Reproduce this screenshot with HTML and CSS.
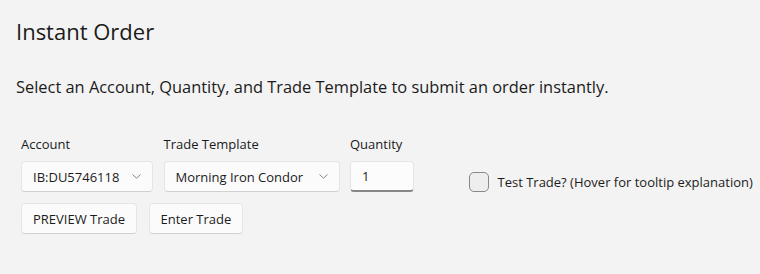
FILE: index.html
```html
<!DOCTYPE html>
<html lang="en">
<head>
    <meta charset="UTF-8">
    <meta name="viewport" content="width=device-width, initial-scale=1.0">
    <title>Instant Order</title>
    <link rel="stylesheet" href="styles.css">
</head>
<body>
    <main class="page">
        <h1 class="title">Instant Order</h1>
        <p class="intro">Select an Account, Quantity, and Trade Template to submit an order instantly.</p>

        <div class="form">
            <div class="form-row">
                <div class="field">
                    <label class="field-label">Account</label>
                    <div class="combo combo-account">
                        <span>IB:DU5746118</span>
                        <svg class="chevron" width="9" height="5" viewBox="0 0 9 5"><path d="M0.5 0.5 L4.5 4.2 L8.5 0.5" fill="none" stroke="#777" stroke-width="0.9"/></svg>
                    </div>
                </div>
                <div class="field">
                    <label class="field-label">Trade Template</label>
                    <div class="combo combo-template">
                        <span>Morning Iron Condor</span>
                        <svg class="chevron" width="9" height="5" viewBox="0 0 9 5"><path d="M0.5 0.5 L4.5 4.2 L8.5 0.5" fill="none" stroke="#777" stroke-width="0.9"/></svg>
                    </div>
                </div>
                <div class="field">
                    <label class="field-label">Quantity</label>
                    <div class="textbox">1</div>
                </div>
                <label class="check">
                    <span class="check-box"></span>
                    <span>Test Trade? (Hover for tooltip explanation)</span>
                </label>
            </div>
            <div class="buttons">
                <button class="btn">PREVIEW Trade</button>
                <button class="btn">Enter Trade</button>
            </div>
        </div>
    </main>
</body>
</html>
```

FILE: styles.css
```css
* {
    margin: 0;
    padding: 0;
    box-sizing: border-box;
}

body {
    font-family: "Open Sans", "Noto Sans", sans-serif;
    background: #f3f3f3;
    color: #1b1b1b;
    font-size: 13px;
}

.page {
    padding: 15px 16px;
}

.title {
    font-size: 22px;
    font-weight: 400;
    line-height: 32px;
}

.intro {
    font-size: 16.4px;
    line-height: 22px;
    margin-top: 29px;
}

.form {
    margin-top: 36px;
    padding-left: 5px;
}

.form-row {
    display: flex;
    align-items: flex-end;
}

.field {
    display: flex;
    flex-direction: column;
    margin-right: 10.5px;
}

.field-label {
    line-height: 20px;
    margin-bottom: 7px;
}

.combo,
.textbox,
.btn {
    height: 31px;
    background: #fbfbfb;
    border: 1px solid #e5e5e5;
    border-bottom-color: #d0d0d0;
    border-radius: 4px;
    font-family: inherit;
    font-size: 13px;
    color: #1b1b1b;
}

.combo {
    display: flex;
    align-items: center;
    justify-content: space-between;
    padding: 0 11px 0 11px;
}

.combo-account {
    width: 132px;
}

.combo-template {
    width: 176px;
}

.textbox {
    width: 64px;
    padding: 0 11px;
    line-height: 28px;
    background: #fcfcfc;
    border-bottom: 2px solid #878787;
}

.check {
    display: flex;
    align-items: center;
    margin-left: 44px;
    gap: 9px;
    white-space: nowrap;
}

.check-box {
    width: 20px;
    height: 20px;
    border: 1px solid #888888;
    border-radius: 5px;
    background: #eeeeee;
}

.buttons {
    display: flex;
    gap: 11.5px;
    margin-top: 11px;
}

.btn {
    padding: 0 11px;
    cursor: pointer;
}
```
